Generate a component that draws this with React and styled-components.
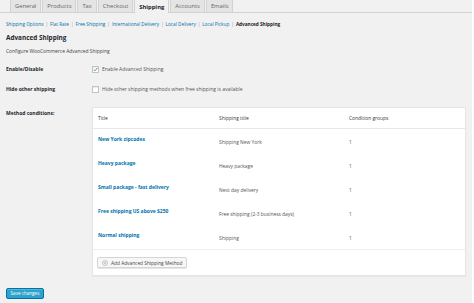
import React from "react";
import styled, { createGlobalStyle } from "styled-components";

const GlobalStyle = createGlobalStyle`
  html, body {
    margin: 0;
    padding: 0;
    background: #ffffff;
  }
  body {
    font-family: "Open Sans", "DejaVu Sans", sans-serif;
    color: #444;
  }
`;

const Page = styled.div`
  width: 472px;
  height: 303px;
  background: #f1f1f1;
  overflow: hidden;
`;

const TabBar = styled.div`
  display: flex;
  gap: 1px;
  height: 13px;
  padding-left: 10px;
  border-bottom: 1px solid #d2d2d2;
  box-sizing: border-box;
`;

const Tab = styled.div`
  display: flex;
  align-items: center;
  padding: 0 4px;
  font-size: 5.8px;
  color: ${(p) => (p.$active ? "#222" : "#666")};
  font-weight: ${(p) => (p.$active ? 700 : 400)};
  background: ${(p) => (p.$active ? "#f1f1f1" : "#e4e4e4")};
  border: 1px solid #d2d2d2;
  border-top: none;
  border-bottom: none;
  margin-bottom: ${(p) => (p.$active ? "-1px" : "0")};
`;

const Content = styled.div`
  padding: 0 6px;
`;

const SubNav = styled.div`
  margin-top: 8px;
  font-size: 4.7px;
  line-height: 7px;
  color: #777;
  white-space: nowrap;
`;

const NavLink = styled.span`
  color: ${(p) => (p.$current ? "#222" : "#0073aa")};
  font-weight: ${(p) => (p.$current ? 700 : 400)};
`;

const Sep = styled.span`
  color: #999;
  padding: 0 2px;
`;

const Heading = styled.h2`
  margin: 6px 0 0;
  font-size: 6.4px;
  line-height: 8px;
  font-weight: 700;
  color: #23282d;
`;

const Intro = styled.p`
  margin: 6px 0 0;
  font-size: 4.9px;
  line-height: 7px;
  color: #444;
`;

const FormRow = styled.div`
  display: grid;
  grid-template-columns: 86px 1fr;
  align-items: ${(p) => (p.$top ? "start" : "center")};
  height: ${(p) => (p.$h ? `${p.$h}px` : "auto")};
  margin-top: ${(p) => (p.$mt ? `${p.$mt}px` : "0")};
`;

const Label = styled.div`
  font-size: 5px;
  font-weight: 700;
  color: #23282d;
  padding-top: ${(p) => (p.$pt ? `${p.$pt}px` : "0")};
`;

const CheckLine = styled.label`
  display: flex;
  align-items: center;
  gap: 3px;
  font-size: 5px;
  color: #555;
`;

const Box = styled.span`
  display: inline-flex;
  align-items: center;
  justify-content: center;
  width: 5px;
  height: 5px;
  border: 1px solid #c3c3c3;
  background: #fff;
  box-shadow: inset 0 1px 1px rgba(0, 0, 0, 0.08);
`;

const Table = styled.div`
  width: 374px;
  background: #fff;
  border: 1px solid #e5e5e5;
  box-sizing: border-box;
  box-shadow: 0 1px 1px rgba(0, 0, 0, 0.04);
`;

const HeadRow = styled.div`
  display: grid;
  grid-template-columns: 121px 130px 1fr;
  align-items: center;
  height: 21px;
  border-bottom: 1px solid #e8e8e8;
  box-sizing: border-box;
`;

const BodyRow = styled.div`
  display: grid;
  grid-template-columns: 121px 130px 1fr;
  align-items: center;
  height: 24px;
`;

const Th = styled.div`
  padding-left: 5px;
  font-size: 4.9px;
  color: #32373c;
`;

const Td = styled.div`
  padding-left: 5px;
  font-size: 4.9px;
  color: #555;
  padding-top: 2px;
`;

const TitleCell = styled.div`
  padding-left: 5px;
  font-size: 5px;
  font-weight: 700;
  color: #0073aa;
  padding-bottom: 4px;
`;

const Footer = styled.div`
  display: flex;
  align-items: center;
  height: 26px;
  padding-left: 4px;
  border-top: 1px solid #efefef;
  box-sizing: border-box;
`;

const AddButton = styled.button`
  display: flex;
  align-items: center;
  gap: 3px;
  height: 11px;
  padding: 0 4px;
  font-family: inherit;
  font-size: 4.8px;
  color: #444;
  background: #f7f7f7;
  border: 1px solid #d5d5d5;
  border-radius: 2px;
  box-shadow: 0 1px 0 #e6e6e6;
`;

const SaveButton = styled.button`
  display: block;
  margin-top: 12px;
  height: 11px;
  width: 38px;
  padding: 0;
  font-family: inherit;
  font-size: 4.6px;
  line-height: 9px;
  color: #fff;
  background: #2ea2cc;
  border: 1px solid #0074a2;
  border-radius: 2px;
  box-shadow: inset 0 1px 0 rgba(120, 200, 230, 0.5);
`;

const tabs = ["General", "Products", "Tax", "Checkout", "Shipping", "Accounts", "Emails"];
const sections = [
  "Shipping Options",
  "Flat Rate",
  "Free Shipping",
  "International Delivery",
  "Local Delivery",
  "Local Pickup",
];
const methods = [
  ["New York zipcodes", "Shipping New York", "1"],
  ["Heavy package", "Heavy package", "1"],
  ["Small package - fast delivery", "Next day delivery", "1"],
  ["Free shipping US above $250", "Free shipping (2-3 business days)", "1"],
  ["Normal shipping", "Shipping", "1"],
];

function Checkbox({ checked }) {
  return (
    <Box>
      {checked && (
        <svg width="5" height="5" viewBox="0 0 10 10">
          <path d="M1.5 5.2 L4 7.6 L8.6 2" fill="none" stroke="#1e8cbe" strokeWidth="1.8" />
        </svg>
      )}
    </Box>
  );
}

export default function App() {
  return (
    <Page>
      <GlobalStyle />
      <TabBar>
        {tabs.map((t) => (
          <Tab key={t} $active={t === "Shipping"}>
            {t}
          </Tab>
        ))}
      </TabBar>
      <Content>
        <SubNav>
          {sections.map((s) => (
            <React.Fragment key={s}>
              <NavLink>{s}</NavLink>
              <Sep>|</Sep>
            </React.Fragment>
          ))}
          <NavLink $current>Advanced Shipping</NavLink>
        </SubNav>
        <Heading>Advanced Shipping</Heading>
        <Intro>Configure WooCommerce Advanced Shipping</Intro>

        <FormRow $h={20} $mt={4}>
          <Label>Enable/Disable</Label>
          <CheckLine>
            <Checkbox checked />
            Enable Advanced Shipping
          </CheckLine>
        </FormRow>
        <FormRow $h={20}>
          <Label>Hide other shipping</Label>
          <CheckLine>
            <Checkbox />
            Hide other shipping methods when free shipping is available
          </CheckLine>
        </FormRow>
        <FormRow $top $mt={8}>
          <Label $pt={3}>Method conditions:</Label>
          <Table>
            <HeadRow>
              <Th>Title</Th>
              <Th>Shipping title</Th>
              <Th>Condition groups</Th>
            </HeadRow>
            {methods.map(([title, ship, groups]) => (
              <BodyRow key={title}>
                <TitleCell>{title}</TitleCell>
                <Td>{ship}</Td>
                <Td>{groups}</Td>
              </BodyRow>
            ))}
            <Footer>
              <AddButton>
                <svg width="6" height="6" viewBox="0 0 12 12">
                  <circle cx="6" cy="6" r="5" fill="none" stroke="#999" strokeWidth="1" />
                  <path d="M3.5 6 H8.5 M6 3.5 V8.5" stroke="#999" strokeWidth="1" />
                </svg>
                Add Advanced Shipping Method
              </AddButton>
            </Footer>
          </Table>
        </FormRow>
        <SaveButton>Save changes</SaveButton>
      </Content>
    </Page>
  );
}
